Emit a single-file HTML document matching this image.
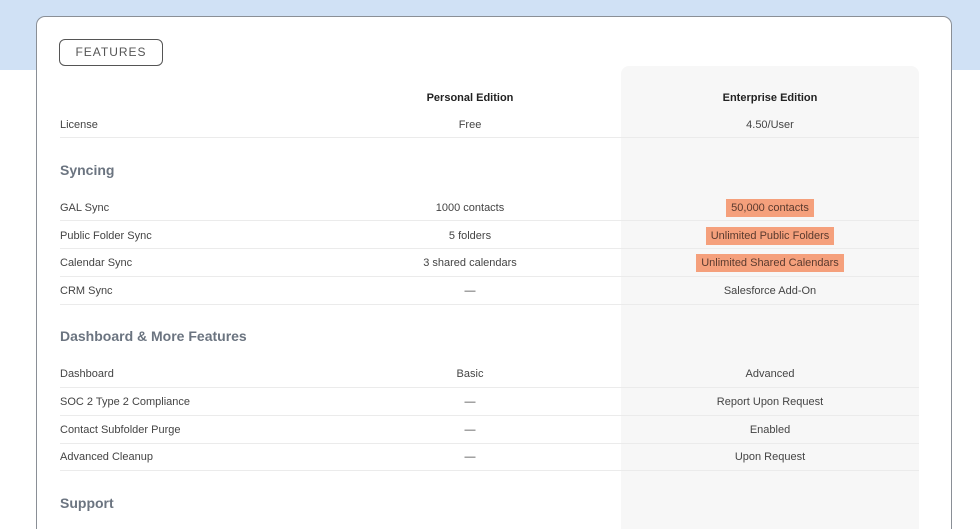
<!DOCTYPE html>
<html style="width:980px;height:529px;overflow:hidden"><head><style>
*{margin:0;padding:0;box-sizing:border-box}
body{width:980px;height:529px;overflow:hidden;background:#fff;font-family:"Liberation Sans",sans-serif;position:relative}
.band{position:absolute;left:0;top:0;width:980px;height:70px;background:#d0e1f5}
.card{position:absolute;left:36px;top:16px;width:916px;height:513px;background:#fff;border:1px solid #8a8f96;border-bottom:none;border-radius:9px 9px 0 0}
.ent{position:absolute;left:621px;top:66px;width:298px;height:463px;background:#f7f7f7;border-radius:8px 8px 0 0}
.feat{position:absolute;left:59px;top:39px;width:104px;height:27px;border:1px solid #555;border-radius:6px;font-size:12px;letter-spacing:1px;color:#555;text-align:center;line-height:25px}
.t{position:absolute;font-size:11px;color:#444;line-height:14px;white-space:nowrap}
.l{left:60px}
.c1{left:370px;width:200px;text-align:center}
.c2{left:621px;width:298px;text-align:center}
.h{font-size:14px;font-weight:bold;color:#6b7480;line-height:18px}
.b{font-weight:bold;color:#222}
.line{position:absolute;left:60px;width:859px;height:1px;background:#ebebeb}
.hl{background:#f5a07c;padding:3px 5px;color:#5a3a2e}
</style></head><body>
<div class="band"></div>
<div class="card"></div>
<div class="ent"></div>
<div class="feat">FEATURES</div>

<div class="t c1 b" style="top:91px">Personal Edition</div>
<div class="t c2 b" style="top:91px">Enterprise Edition</div>
<div class="t l" style="top:118px">License</div><div class="t c1" style="top:118px">Free</div><div class="t c2" style="top:118px">4.50/User</div>
<div class="line" style="top:137px"></div>

<div class="t l h" style="top:161px">Syncing</div>
<div class="t l" style="top:201px">GAL Sync</div><div class="t c1" style="top:201px">1000 contacts</div><div class="t c2" style="top:201px"><span class="hl">50,000 contacts</span></div>
<div class="line" style="top:220px"></div>
<div class="t l" style="top:229px">Public Folder Sync</div><div class="t c1" style="top:229px">5 folders</div><div class="t c2" style="top:229px"><span class="hl">Unlimited Public Folders</span></div>
<div class="line" style="top:248px"></div>
<div class="t l" style="top:256px">Calendar Sync</div><div class="t c1" style="top:256px">3 shared calendars</div><div class="t c2" style="top:256px"><span class="hl">Unlimited Shared Calendars</span></div>
<div class="line" style="top:276px"></div>
<div class="t l" style="top:284px">CRM Sync</div><div class="t c1" style="top:284px">—</div><div class="t c2" style="top:284px">Salesforce Add-On</div>
<div class="line" style="top:304px"></div>

<div class="t l h" style="top:327px">Dashboard &amp; More Features</div>
<div class="t l" style="top:367px">Dashboard</div><div class="t c1" style="top:367px">Basic</div><div class="t c2" style="top:367px">Advanced</div>
<div class="line" style="top:387px"></div>
<div class="t l" style="top:395px">SOC 2 Type 2 Compliance</div><div class="t c1" style="top:395px">—</div><div class="t c2" style="top:395px">Report Upon Request</div>
<div class="line" style="top:415px"></div>
<div class="t l" style="top:423px">Contact Subfolder Purge</div><div class="t c1" style="top:423px">—</div><div class="t c2" style="top:423px">Enabled</div>
<div class="line" style="top:443px"></div>
<div class="t l" style="top:450px">Advanced Cleanup</div><div class="t c1" style="top:450px">—</div><div class="t c2" style="top:450px">Upon Request</div>
<div class="line" style="top:470px"></div>

<div class="t l h" style="top:494px">Support</div>
</body></html>
